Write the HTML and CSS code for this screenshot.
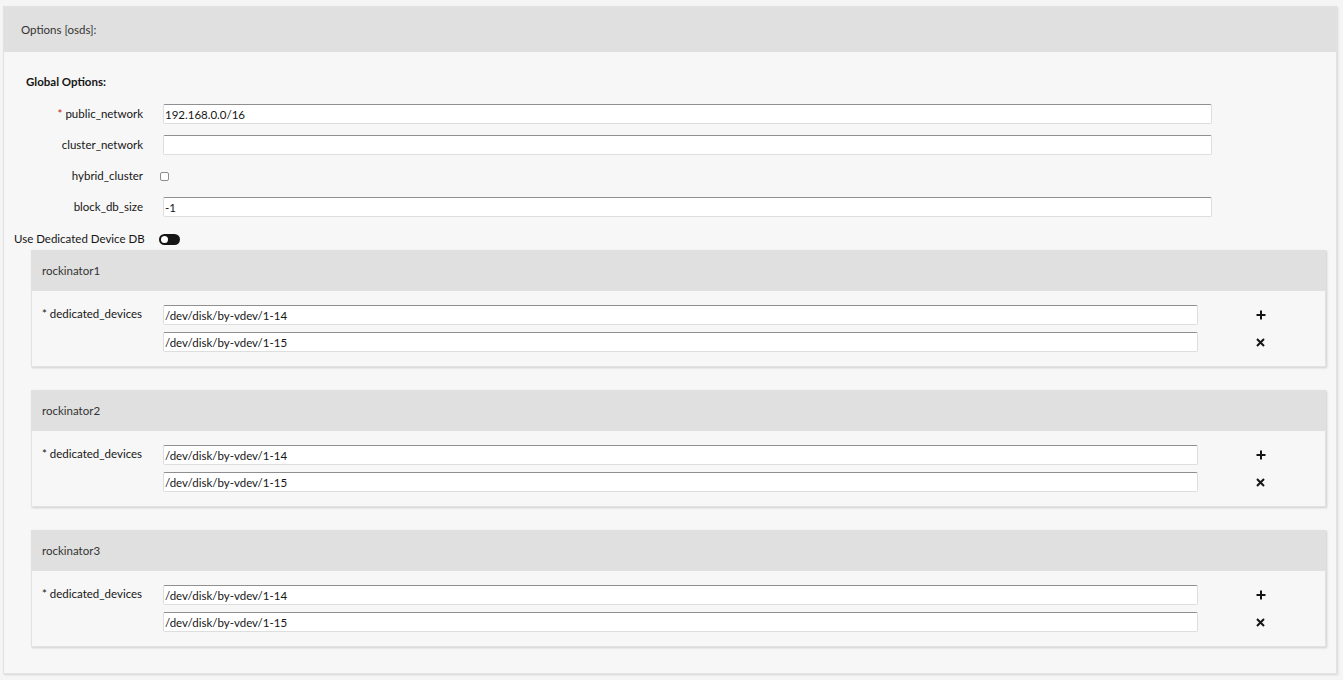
FILE: index.html
```html
<!DOCTYPE html>
<html>
<head>
<meta charset="utf-8">
<link rel="stylesheet" href="styles.css">
</head>
<body>
<div class="page">
  <section class="card">
    <header class="card-head">Options [osds]:</header>
    <div class="card-body">
      <h3 class="section-title">Global Options:</h3>
      <div class="form">
        <label class="lbl"><span class="req">*</span> public_network</label>
        <input class="inp" type="text" value="192.168.0.0/16">
        <label class="lbl">cluster_network</label>
        <input class="inp" type="text" value="">
        <label class="lbl">hybrid_cluster</label>
        <div class="cell"><span class="checkbox"></span></div>
        <label class="lbl">block_db_size</label>
        <input class="inp" type="text" value="-1">
      </div>
      <div class="toggle-row">
        <span class="lbl wide">Use Dedicated Device DB</span>
        <span class="toggle"><span class="knob"></span></span>
      </div>
      <div class="hosts">
        <section class="sub">
          <header class="sub-head">rockinator1</header>
          <div class="sub-body">
            <span class="sub-lbl">* dedicated_devices</span>
            <div class="devs">
              <div class="dev"><input class="inp" type="text" value="/dev/disk/by-vdev/1-14"><span class="act"><svg width="10" height="10" viewBox="0 0 10 10"><path d="M5 0.5V9.5M0.5 5H9.5" stroke="#151515" stroke-width="2"/></svg></span></div>
              <div class="dev"><input class="inp" type="text" value="/dev/disk/by-vdev/1-15"><span class="act"><svg width="9" height="9" viewBox="0 0 9 9"><path d="M1 1L8 8M8 1L1 8" stroke="#151515" stroke-width="2"/></svg></span></div>
            </div>
          </div>
        </section>
        <section class="sub">
          <header class="sub-head">rockinator2</header>
          <div class="sub-body">
            <span class="sub-lbl">* dedicated_devices</span>
            <div class="devs">
              <div class="dev"><input class="inp" type="text" value="/dev/disk/by-vdev/1-14"><span class="act"><svg width="10" height="10" viewBox="0 0 10 10"><path d="M5 0.5V9.5M0.5 5H9.5" stroke="#151515" stroke-width="2"/></svg></span></div>
              <div class="dev"><input class="inp" type="text" value="/dev/disk/by-vdev/1-15"><span class="act"><svg width="9" height="9" viewBox="0 0 9 9"><path d="M1 1L8 8M8 1L1 8" stroke="#151515" stroke-width="2"/></svg></span></div>
            </div>
          </div>
        </section>
        <section class="sub">
          <header class="sub-head">rockinator3</header>
          <div class="sub-body">
            <span class="sub-lbl">* dedicated_devices</span>
            <div class="devs">
              <div class="dev"><input class="inp" type="text" value="/dev/disk/by-vdev/1-14"><span class="act"><svg width="10" height="10" viewBox="0 0 10 10"><path d="M5 0.5V9.5M0.5 5H9.5" stroke="#151515" stroke-width="2"/></svg></span></div>
              <div class="dev"><input class="inp" type="text" value="/dev/disk/by-vdev/1-15"><span class="act"><svg width="9" height="9" viewBox="0 0 9 9"><path d="M1 1L8 8M8 1L1 8" stroke="#151515" stroke-width="2"/></svg></span></div>
            </div>
          </div>
        </section>
      </div>
    </div>
  </section>
</div>
</body>
</html>
```

FILE: styles.css
```css
* { box-sizing: border-box; }
html, body { margin: 0; padding: 0; }
body {
  background: #f5f5f5;
  font-family: Lato, "Open Sans", sans-serif;
  font-size: 11.5px;
  color: #151515;
  width: 1343px;
  height: 680px;
  overflow: hidden;
}
.page { padding: 6px 6px 0 3px; }
.card {
  width: 1334px;
  background: #f7f7f7;
  border: 1px solid #e2e2e2;
  box-shadow: 1px 1px 2px rgba(0,0,0,0.12);
}
.card-head {
  height: 45px;
  background: #e0e0e0;
  display: flex;
  align-items: center;
  padding-left: 17px;
  color: #333;
}
.card-body { padding: 20px 10px 26px 10px; }
.section-title {
  margin: 0 0 12px 12px;
  font-size: 11.5px;
  font-weight: 700;
  line-height: 20px;
}
.form {
  display: grid;
  grid-template-columns: 129px 1049px;
  column-gap: 20px;
  row-gap: 11px;
  align-items: center;
}
.lbl { text-align: right; line-height: 20px; white-space: nowrap; }
.req { color: #c9190b; }
.cell { height: 20px; display: flex; align-items: center; }
.checkbox {
  width: 9px; height: 9px;
  border: 1px solid #8a8d90;
  border-radius: 2px;
  background: #fff;
  margin-left: -3px;
}
.inp {
  height: 20px;
  width: 100%;
  margin: 0;
  padding: 0 1px;
  font: inherit;
  font-size: 11.5px;
  color: #151515;
  background: #fff;
  border: 1px solid #dedede;
  border-top-color: #8f8f8f;
  border-radius: 2px;
  outline: none;
}
.toggle-row {
  display: flex;
  align-items: center;
  margin-top: 11px;
  height: 22px;
}
.lbl.wide { width: 129px; }
.toggle {
  margin-left: 16px;
  width: 21px; height: 11px;
  border-radius: 6px;
  background: #151515;
  position: relative;
  display: inline-block;
}
.knob {
  position: absolute;
  left: 2px; top: 2px;
  width: 7px; height: 7px;
  border-radius: 50%;
  background: #fff;
}
.hosts {
  margin: 0 0 0 17px;
  display: flex;
  flex-direction: column;
  gap: 23px;
}
.sub {
  background: #f7f7f7;
  border: 1px solid #e2e2e2;
  border-top: none;
  box-shadow: 1px 1px 2px rgba(0,0,0,0.16);
}
.sub-head {
  height: 41px;
  background: #e0e0e0;
  display: flex;
  align-items: center;
  margin: 0 -1px;
  padding-left: 11px;
  color: #333;
}
.sub-body {
  display: flex;
  padding: 14px 0 14px 10px;
}
.sub-lbl { width: 121px; line-height: 18px; white-space: nowrap; }
.devs { display: flex; flex-direction: column; gap: 7px; }
.dev { display: flex; align-items: center; }
.dev .inp { width: 1035px; }
.act {
  width: 125px;
  display: flex;
  justify-content: center;
  align-items: center;
}
```
